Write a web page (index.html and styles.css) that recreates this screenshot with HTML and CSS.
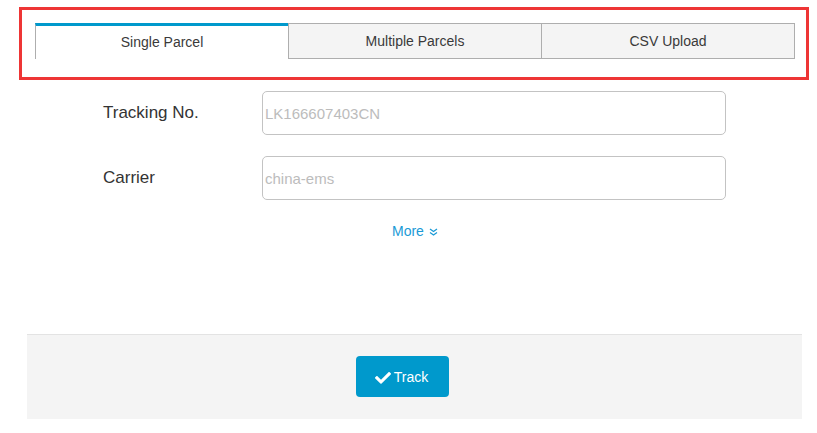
FILE: index.html
```html
<!DOCTYPE html>
<html>
<head>
<meta charset="utf-8">
<link rel="stylesheet" href="styles.css">
</head>
<body>
<div class="tabs-box">
  <div class="tabs">
    <div class="tab active">Single Parcel</div>
    <div class="tab">Multiple Parcels</div>
    <div class="tab">CSV Upload</div>
  </div>
</div>
<form class="form">
  <div class="row">
    <label class="label">Tracking No.</label>
    <input class="input" type="text" placeholder="LK166607403CN">
  </div>
  <div class="row">
    <label class="label">Carrier</label>
    <input class="input" type="text" placeholder="china-ems">
  </div>
  <div class="more-line">
    <a class="more" href="#">More <svg class="chev" width="9" height="8" viewBox="0 0 9 8"><polyline points="1,1 4.5,3.5 8,1" fill="none" stroke="#1a9ad6" stroke-width="1.3"/><polyline points="1,4.5 4.5,7 8,4.5" fill="none" stroke="#1a9ad6" stroke-width="1.3"/></svg></a>
  </div>
</form>
<div class="footer">
  <button class="btn" type="button"><svg class="check" width="16" height="14" viewBox="0 0 512 440"><path fill="#fff" d="M173.9 431.4l-166.4-166.4c-10-10-10-26.2 0-36.2l36.2-36.2c10-10 26.2-10 36.2 0L192 304.7 432.1 64.6c10-10 26.2-10 36.2 0l36.2 36.2c10 10 10 26.2 0 36.2l-294.4 294.4c-10 10-26.200 10-36.2 0z"/></svg>Track</button>
</div>
</body>
</html>
```

FILE: styles.css
```css
html, body {
  margin: 0;
  padding: 0;
  background: #fff;
  font-family: "Liberation Sans", Arial, sans-serif;
  color: #333;
}

.tabs-box {
  box-sizing: border-box;
  margin: 7px 0 0 19px;
  width: 790px;
  height: 73px;
  border: 3px solid #ee3535;
  padding: 13px 11px 0 13px;
}

.tabs {
  display: flex;
  height: 36px;
}

.tab {
  flex: 1;
  box-sizing: border-box;
  display: flex;
  align-items: center;
  justify-content: center;
  font-size: 14px;
  color: #3a3a3a;
  background: #f4f4f4;
  border: 1px solid #aeaeae;
  border-left: none;
}

.tab.active {
  background: #fff;
  border-top: 3px solid #0099cc;
  border-left: 1px solid #aeaeae;
  border-bottom: none;
  border-right: none;
  padding-bottom: 1px;
}

.tab.active + .tab {
  border-left: 1px solid #aeaeae;
}

.form {
  margin: 11px 0 0 0;
}

.row {
  display: flex;
  align-items: center;
  padding-left: 103px;
  margin-bottom: 21px;
}

.label {
  width: 159px;
  font-size: 17px;
  color: #333;
}

.input {
  box-sizing: border-box;
  width: 464px;
  height: 44px;
  border: 1px solid #c3c3c3;
  border-radius: 5px;
  padding: 0 2px;
  font-family: "Liberation Sans", Arial, sans-serif;
  font-size: 15px;
  color: #333;
  outline: none;
}

.input::placeholder {
  color: #bcbcbc;
}

.more-line {
  display: flex;
  padding-left: 392px;
  margin-top: 0;
  height: 20px;
  align-items: center;
}

.more {
  display: flex;
  align-items: center;
  gap: 5px;
  font-size: 14px;
  color: #1a9ad6;
  text-decoration: none;
}

.chev {
  margin-top: 1px;
}

.footer {
  box-sizing: border-box;
  margin: 93px 0 0 27px;
  width: 775px;
  height: 85px;
  background: #f4f4f4;
  border-top: 1px solid #e3e3e3;
  padding: 21px 0 0 329px;
}

.btn {
  display: flex;
  align-items: center;
  justify-content: center;
  gap: 3px;
  width: 93px;
  height: 41px;
  border: none;
  border-radius: 4px;
  background: #0099cc;
  color: #fff;
  font-family: "Liberation Sans", Arial, sans-serif;
  font-size: 14px;
  padding: 0 2px 0 0;
}

.check {
  margin-top: 1px;
}
```
